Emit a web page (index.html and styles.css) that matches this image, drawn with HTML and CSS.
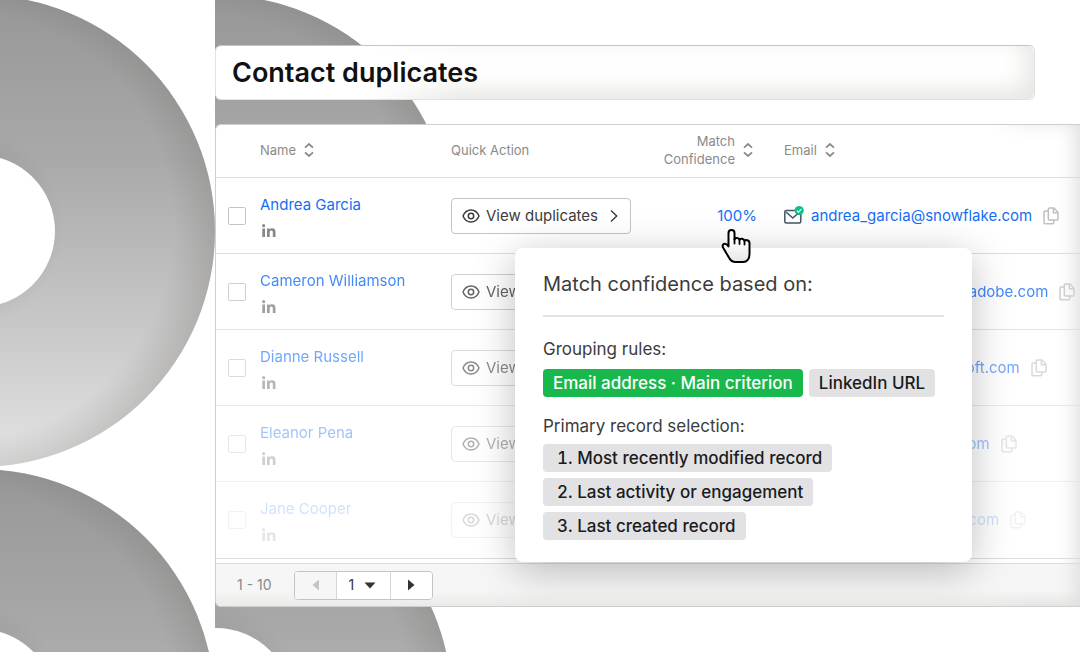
FILE: index.html
```html
<!doctype html>
<html lang="en">
    <head>
        <meta charset="UTF-8" />
        <title>Contact duplicates</title>
        <link rel="stylesheet" href="styles.css">
    </head>
    <body>
        <!-- Decorative rings -->
        <svg class="rings" width="1080" height="652" aria-hidden="true">
            <defs>
                <linearGradient id="ringFill" x1="0" y1="0" x2="0" y2="1">
                    <stop offset="0" stop-color="#979797" />
                    <stop offset="0.35" stop-color="#a9a9a9" />
                    <stop offset="0.7" stop-color="#c8c8c8" />
                    <stop offset="1" stop-color="#e4e4e4" />
                </linearGradient>
                <radialGradient id="ringEdge" cx="0.46" cy="0.49" r="0.55">
                    <stop offset="0.3" stop-color="#6b6762" stop-opacity="0.1" />
                    <stop offset="0.4" stop-color="#6b6762" stop-opacity="0" />
                    <stop offset="0.82" stop-color="#6b6762" stop-opacity="0" />
                    <stop offset="1" stop-color="#6b6762" stop-opacity="0.26" />
                </radialGradient>
                <path
                    id="ringShape"
                    fill-rule="evenodd"
                    d="M0-236a236 236 0 1 1 0 472a236 236 0 1 1 0-472zM0-76a76 76 0 1 0 0 152a76 76 0 1 0 0-152z"
                />
                <g id="ring">
                    <use href="#ringShape" fill="url(#ringFill)" />
                    <use href="#ringShape" fill="url(#ringEdge)" />
                </g>
                <clipPath id="leftClip"><rect width="215" height="652" /></clipPath>
                <clipPath id="rightClip"><rect x="215" width="865" height="652" /></clipPath>
            </defs>
            <g clip-path="url(#leftClip)">
                <use href="#ring" x="-21" y="231" />
                <use href="#ring" x="-21" y="705" />
            </g>
            <g clip-path="url(#rightClip)">
                <use href="#ring" x="216" y="231" />
                <use href="#ring" x="216" y="704" />
            </g>
        </svg>

        <!-- Shared icons -->
        <svg class="sprite" aria-hidden="true">
            <symbol id="sort" viewBox="0 0 10 14">
                <path d="M1 4.600L5 1l4 3.600M1 9.400L5 13l4-3.600" fill="none" stroke="currentColor" stroke-width="1.800" />
            </symbol>
            <symbol id="eye" viewBox="0 0 18 14">
                <path d="M1 7C2.600 3.200 5.600 1 9 1s6.400 2.200 8 6c-1.600 3.800-4.600 6-8 6S2.600 10.800 1 7z" fill="none" stroke="currentColor" stroke-width="1.500" stroke-linejoin="round" />
                <circle cx="9" cy="7" r="2.700" fill="none" stroke="currentColor" stroke-width="1.500" />
            </symbol>
            <symbol id="linkedin" viewBox="0 0 14 13">
                <path d="M0.300 4.400h2.700V13H0.300zM5 4.400h2.500v1.200c0.500-0.900 1.400-1.400 2.600-1.400 2.600 0 3.400 1.600 3.400 4V13h-2.700V8.700c0-1.300-0.300-2.200-1.500-2.200s-1.600 0.900-1.600 2.200V13H5z" fill="currentColor" />
                <circle cx="1.650" cy="1.650" r="1.550" fill="currentColor" />
            </symbol>
            <symbol id="chevron" viewBox="0 0 8 12">
                <path d="M1 0.500l5.700 5.500L1 11.500" fill="none" stroke="currentColor" stroke-width="1.400" />
            </symbol>
            <symbol id="mail" viewBox="0 0 20 20">
                <rect x="0.800" y="4.500" width="16" height="12.500" rx="1.500" fill="#fff" stroke="#475467" stroke-width="1.500" />
                <path d="M2 6l6.800 6L15.500 6" fill="none" stroke="#475467" stroke-width="1.500" />
                <circle cx="15.200" cy="4.600" r="4.600" fill="#06c28c" />
                <path d="M13 4.700l1.600 1.500 2.700-3" fill="none" stroke="#fff" stroke-width="1.200" />
            </symbol>
            <symbol id="copy" viewBox="0 0 16 18">
                <path d="M6.500 1h4.500L15 5.200v6.600a1.200 1.200 0 0 1-1.200 1.200H6.500a1.200 1.200 0 0 1-1.200-1.200V2.200A1.200 1.200 0 0 1 6.500 1zM10.400 1v4.800H15M5.300 4H2.200A1.200 1.200 0 0 0 1 5.200v10.400a1.200 1.200 0 0 0 1.200 1.200h7.400a1.200 1.200 0 0 0 1.200-1.200V13" fill="none" stroke="currentColor" stroke-width="1.500" stroke-linejoin="round" />
            </symbol>
        </svg>

        <main class="page">
            <header class="title-bar">
                <h1>Contact duplicates</h1>
            </header>

            <section class="card">
                <table class="contacts">
                    <colgroup>
                        <col class="col-check" />
                        <col class="col-name" />
                        <col class="col-action" />
                        <col class="col-match" />
                        <col />
                    </colgroup>
                    <thead>
                        <tr>
                            <td></td>
                            <th><span class="heading">Name <svg class="sort"><use href="#sort" /></svg></span></th>
                            <th>Quick Action</th>
                            <th class="match"><span class="heading"><span>Match<br />Confidence</span> <svg class="sort"><use href="#sort" /></svg></span></th>
                            <th class="email-cell"><span class="heading">Email <svg class="sort"><use href="#sort" /></svg></span></th>
                        </tr>
                    </thead>
                    <tbody>
                        <tr>
                            <td><input type="checkbox" aria-label="Select Andrea Garcia" /></td>
                            <td>
                                <div class="person">
                                    <a href="#">Andrea Garcia</a>
                                    <svg class="linkedin"><use href="#linkedin" /></svg>
                                </div>
                            </td>
                            <td><button class="view"><svg class="eye"><use href="#eye" /></svg>View duplicates<svg class="chevron"><use href="#chevron" /></svg></button></td>
                            <td class="match"><a href="#">100%</a></td>
                            <td class="email-cell">
                                <div class="email">
                                    <svg class="mail"><use href="#mail" /></svg>
                                    <a href="#">andrea_garcia@snowflake.com</a>
                                    <button class="copy" aria-label="Copy email"><svg><use href="#copy" /></svg></button>
                                </div>
                            </td>
                        </tr>
                        <tr>
                            <td><input type="checkbox" aria-label="Select Cameron Williamson" /></td>
                            <td>
                                <div class="person">
                                    <a href="#">Cameron Williamson</a>
                                    <svg class="linkedin"><use href="#linkedin" /></svg>
                                </div>
                            </td>
                            <td><button class="view"><svg class="eye"><use href="#eye" /></svg>View duplicates<svg class="chevron"><use href="#chevron" /></svg></button></td>
                            <td></td>
                            <td class="email-cell">
                                <div class="email">
                                    <svg class="mail"><use href="#mail" /></svg>
                                    <a href="#">cameron_williamson@adobe.com</a>
                                    <button class="copy" aria-label="Copy email"><svg><use href="#copy" /></svg></button>
                                </div>
                            </td>
                        </tr>
                        <tr>
                            <td><input type="checkbox" aria-label="Select Dianne Russell" /></td>
                            <td>
                                <div class="person">
                                    <a href="#">Dianne Russell</a>
                                    <svg class="linkedin"><use href="#linkedin" /></svg>
                                </div>
                            </td>
                            <td><button class="view"><svg class="eye"><use href="#eye" /></svg>View duplicates<svg class="chevron"><use href="#chevron" /></svg></button></td>
                            <td></td>
                            <td class="email-cell">
                                <div class="email">
                                    <svg class="mail"><use href="#mail" /></svg>
                                    <a href="#">diane_russell@microsoft.com</a>
                                    <button class="copy" aria-label="Copy email"><svg><use href="#copy" /></svg></button>
                                </div>
                            </td>
                        </tr>
                        <tr>
                            <td><input type="checkbox" aria-label="Select Eleanor Pena" /></td>
                            <td>
                                <div class="person">
                                    <a href="#">Eleanor Pena</a>
                                    <svg class="linkedin"><use href="#linkedin" /></svg>
                                </div>
                            </td>
                            <td><button class="view"><svg class="eye"><use href="#eye" /></svg>View duplicates<svg class="chevron"><use href="#chevron" /></svg></button></td>
                            <td></td>
                            <td class="email-cell">
                                <div class="email">
                                    <svg class="mail"><use href="#mail" /></svg>
                                    <a href="#">eleanor_pena@tesla.com</a>
                                    <button class="copy" aria-label="Copy email"><svg><use href="#copy" /></svg></button>
                                </div>
                            </td>
                        </tr>
                        <tr>
                            <td><input type="checkbox" aria-label="Select Jane Cooper" /></td>
                            <td>
                                <div class="person">
                                    <a href="#">Jane Cooper</a>
                                    <svg class="linkedin"><use href="#linkedin" /></svg>
                                </div>
                            </td>
                            <td><button class="view"><svg class="eye"><use href="#eye" /></svg>View duplicates<svg class="chevron"><use href="#chevron" /></svg></button></td>
                            <td></td>
                            <td class="email-cell">
                                <div class="email">
                                    <svg class="mail"><use href="#mail" /></svg>
                                    <a href="#">jane_cooper@shopify.com</a>
                                    <button class="copy" aria-label="Copy email"><svg><use href="#copy" /></svg></button>
                                </div>
                            </td>
                        </tr>
                    </tbody>
                </table>

                <footer class="pagination">
                    <span>1 - 10</span>
                    <div class="pager">
                        <button disabled aria-label="Previous page"><svg width="7" height="12"><path d="M7 0.500v11L0.500 6z" fill="#c4c4c4" /></svg></button>
                        <div class="page-select">
                            <select aria-label="Page"><option>1</option></select>
                            <svg width="12" height="7"><path d="M0.500 0.500h11L6 6.500z" fill="#333" /></svg>
                        </div>
                        <button aria-label="Next page"><svg width="7" height="12"><path d="M0 0.500v11L6.500 6z" fill="#333" /></svg></button>
                    </div>
                </footer>

                <div class="popover">
                    <h2>Match confidence based on:</h2>
                    <hr />
                    <h3>Grouping rules:</h3>
                    <div class="chips">
                        <span class="chip main">Email address · Main criterion</span>
                        <span class="chip">LinkedIn URL</span>
                    </div>
                    <h3>Primary record selection:</h3>
                    <ol class="criteria">
                        <li class="chip">Most recently modified record</li>
                        <li class="chip">Last activity or engagement</li>
                        <li class="chip">Last created record</li>
                    </ol>
                </div>

                <svg class="cursor" viewBox="0 0 30 36" aria-hidden="true">
                    <defs>
                        <linearGradient id="handFill" x1="0" y1="0" x2="0" y2="1">
                            <stop offset="0.3" stop-color="#fff" />
                            <stop offset="1" stop-color="#e6e6e6" />
                        </linearGradient>
                    </defs>
                    <path
                        d="M7.500 18.500V5a3 3 0 0 1 6 0v6.500c0.500-2 4.500-2 5 0.500c0.500-2 4.500-1.500 5 1c0.500-1.600 5-1.300 5 2v11c0 4.700-2.500 8-6.500 8H14.500c-3 0-4.800-1.200-6.300-4L2 19.500c-0.800-2 0-3.800 1.500-3.800c1.600 0 2.800 1 4 2.800z"
                        fill="url(#handFill)"
                        stroke="#000"
                        stroke-width="2"
                        stroke-linejoin="round"
                    />
                    <path d="M13.500 11v4.500M18.500 12v4M23.500 13v3.500" stroke="#000" stroke-width="1.800" stroke-linecap="round" />
                </svg>
            </section>
        </main>
    </body>
</html>
```
FILE: styles.css
```css
* {
    box-sizing: border-box;
}
body {
    margin: 0;
    background-color: #fff;
    color: #3c3c3c;
    font-family: Inter, "Liberation Sans", sans-serif;
    font-size: 15px;
    line-height: 20px;
    overflow: hidden;
}
h1,
h2,
h3 {
    margin: 0;
}
a {
    color: #146ef5;
    text-decoration: none;
}
button,
select {
    font: inherit;
    color: inherit;
}
svg {
    display: block;
    flex: none;
}
.rings {
    position: absolute;
    top: 0;
    left: 0;
}
.sprite {
    position: absolute;
    width: 0;
    height: 0;
}
.page {
    position: relative;
    padding: 45px 0 0 215px;
}

/* Title bar */
.title-bar {
    position: relative;
    margin: 0 45px 24px 0;
    padding: 13px 16px 12px;
    border: 1px solid #e2e2e2;
    border-top-color: #c4c4c4;
    border-radius: 6px;
    background-color: #fff;
}
.title-bar::after {
    content: "";
    position: absolute;
    inset: 0;
    border-radius: 6px;
    box-shadow: inset -8px -8px 24px #e6e5e2;
    mask-image: linear-gradient(to right, transparent 150px, #000 240px);
}
.title-bar h1 {
    position: relative;
    z-index: 1;
    color: #111;
    font-size: 27px;
    font-weight: 600;
    line-height: 28px;
}

/* Table */
.card {
    position: relative;
    border: 1px solid #cfcfcf;
    border-right: 0;
    border-radius: 6px 0 0 6px;
    background-color: #fff;
}
.card::after {
    content: "";
    position: absolute;
    inset: 0;
    pointer-events: none;
    box-shadow: inset -8px 0 20px -4px #dedcd9;
    mask-image: linear-gradient(to left, #000 50px, transparent 90px);
}
.contacts {
    width: 100%;
    table-layout: fixed;
    border-spacing: 0;
    border-bottom: 1px solid #dcdcdc;
}
.col-check {
    width: 44px;
}
.col-name {
    width: 191px;
}
.col-action {
    width: 182px;
}
.col-match {
    width: 124px;
}
.contacts th,
.contacts td {
    height: 76px;
    padding: 0;
    border-bottom: 1px solid #dcdcdc;
    text-align: left;
    white-space: nowrap;
}
.contacts thead th,
.contacts thead td {
    height: 53px;
    padding-bottom: 2px;
    color: #8a8a8a;
    font-size: 13px;
    font-weight: 400;
    line-height: 18px;
}
.contacts .match {
    text-align: right;
}
.contacts thead .match {
    padding-right: 4px;
}
.contacts .email-cell {
    padding-left: 27px;
}
.contacts tr:nth-child(2) {
    opacity: 0.8;
}
.contacts tr:nth-child(3) {
    opacity: 0.6;
}
.contacts tr:nth-child(4) {
    opacity: 0.4;
}
.contacts tr:nth-child(5) {
    opacity: 0.2;
}
.contacts tr:nth-child(5) td {
    border-bottom: 0;
}
.heading {
    display: inline-flex;
    align-items: center;
    gap: 8px;
}
.sort {
    width: 10px;
    height: 14px;
}
.contacts input {
    appearance: none;
    display: block;
    width: 18px;
    height: 18px;
    margin: 0 0 0 12px;
    border: 1px solid #c4c4c4;
    border-radius: 2px;
    background-color: #fff;
}
.person {
    display: grid;
    gap: 9px;
}
.linkedin {
    width: 14px;
    height: 13px;
    margin-left: 2px;
    color: #888;
}
.view {
    display: flex;
    align-items: center;
    gap: 6px;
    height: 36px;
    padding: 0 12px 0 10px;
    border: 1px solid #c4c4c4;
    border-radius: 4px;
    background-color: #fff;
}
.eye {
    width: 18px;
    height: 14px;
}
.chevron {
    width: 8px;
    height: 12px;
    margin-left: 6px;
}
.email {
    display: flex;
    align-items: center;
    gap: 7px;
}
.mail {
    width: 20px;
    height: 20px;
}
.copy {
    margin-left: 4px;
    padding: 0;
    border: 0;
    background: none;
    color: #c0c0c0;
}
.copy svg {
    width: 16px;
    height: 18px;
}

/* Pagination */
.pagination {
    display: flex;
    align-items: center;
    gap: 22px;
    height: 43px;
    margin-top: 4px;
    padding-left: 21px;
    border-top: 1px solid #dcdcdc;
    border-radius: 0 0 0 6px;
    background-color: #f6f6f6;
    background-image: linear-gradient(to top, #ebeae8, rgba(246, 246, 246, 0) 16px);
    color: #8a8a8a;
    font-size: 14px;
}
.pager {
    display: flex;
    height: 29px;
    overflow: hidden;
    border: 1px solid #c4c4c4;
    border-radius: 4px;
    background-color: #fff;
}
.pager button {
    display: grid;
    place-items: center;
    width: 41px;
    padding: 0;
    border: 0;
    background-color: #fff;
}
.pager button:disabled {
    background-color: #f6f6f6;
}
.page-select {
    display: grid;
    align-items: center;
    width: 55px;
    border: solid #d6d6d6;
    border-width: 0 1px;
}
.page-select > * {
    grid-area: 1 / 1;
}
.page-select select {
    appearance: none;
    height: 27px;
    padding: 0 0 0 12px;
    border: 0;
    background-color: #fff;
    color: #333;
}
.page-select svg {
    justify-self: end;
    margin-right: 14px;
    pointer-events: none;
}

/* Match confidence popover */
.popover {
    position: absolute;
    top: 123px;
    left: 299px;
    z-index: 2;
    width: 457px;
    padding: 24px 28px 22px;
    border-radius: 8px;
    background-color: #fff;
    box-shadow: 0 8px 40px rgba(0, 0, 0, 0.26);
}
.popover h2 {
    font-size: 20px;
    font-weight: 400;
    line-height: 24px;
}
.popover hr {
    height: 2px;
    margin: 19px 0 20px;
    border: 0;
    background-color: #e2e2e4;
}
.popover h3 {
    font-size: 17px;
    font-weight: 400;
    line-height: 24px;
}
.chips {
    display: flex;
    gap: 6px;
    margin: 8px 0 17px;
}
.chip {
    padding: 0 10px;
    border-radius: 4px;
    background-color: #e2e2e5;
    color: #1b1b1b;
    font-size: 17px;
    font-weight: 500;
    line-height: 28px;
    white-space: nowrap;
}
.chip.main {
    background-color: #19b84d;
    color: #fff;
}
.criteria {
    display: grid;
    justify-items: start;
    gap: 6px;
    margin: 6px 0 0;
    padding: 0;
    list-style-position: inside;
}
.criteria .chip {
    padding-left: 14px;
}
.cursor {
    position: absolute;
    top: 103px;
    left: 505px;
    z-index: 3;
    width: 30px;
    height: 36px;
}
```
